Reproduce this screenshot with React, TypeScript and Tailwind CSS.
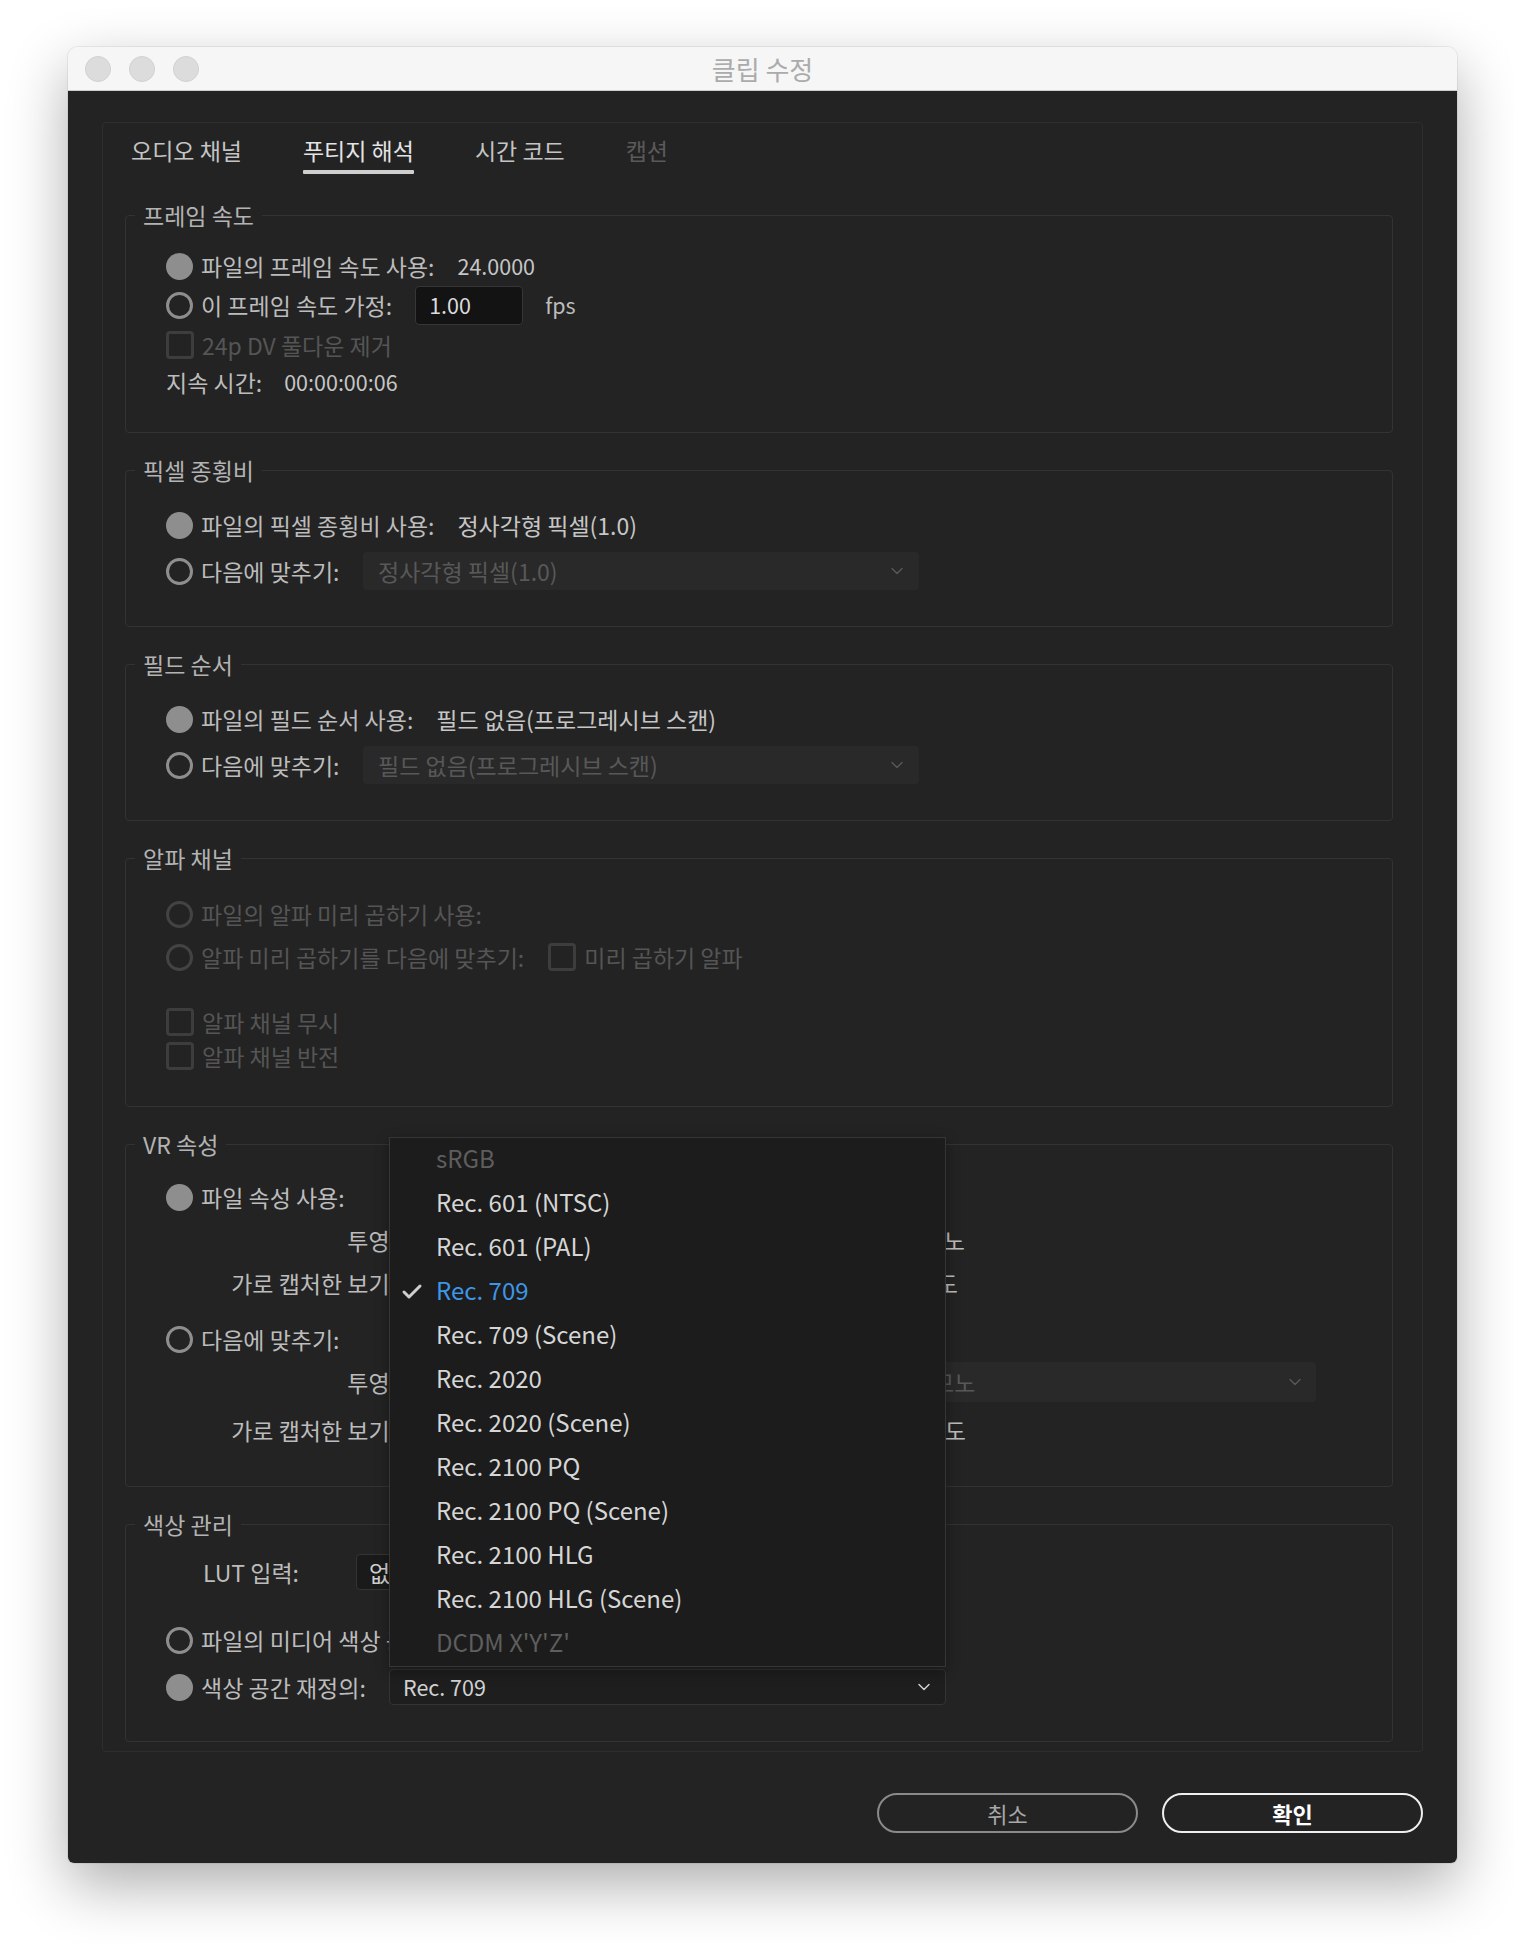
import { Check, ChevronDown } from 'lucide-react';

type RadioKind = 'on' | 'off' | 'dim';

function Radio({ kind }: { kind: RadioKind }) {
  if (kind === 'on') return <span className="w-[27px] h-[27px] shrink-0 rounded-full bg-[#8e8e8e] mr-[8px]" />;
  if (kind === 'off') return <span className="w-[27px] h-[27px] shrink-0 rounded-full border-[3px] border-[#8e8e8e] mr-[8px]" />;
  return <span className="w-[27px] h-[27px] shrink-0 rounded-full border-[3px] border-[#434343] mr-[8px]" />;
}

function CheckBox() {
  return <span className="w-[28px] h-[28px] shrink-0 rounded-[4px] border-[3px] border-[#3d3d3d] mr-[8px]" />;
}

function DimSelect({ value, width }: { value: string; width: string }) {
  return (
    <div className={`${width} h-[38px] rounded-[4px] bg-[#292929] flex items-center justify-between pl-[15px] pr-[12px] text-[#585858]`}>
      <span>{value}</span>
      <ChevronDown size={20} strokeWidth={1.5} className="text-[#5a5a5a]" />
    </div>
  );
}

function Section({ title, children, className }: { title: string; children: React.ReactNode; className: string }) {
  return (
    <fieldset className={`w-[1268px] ml-[22px] border border-[#333333] rounded-[4px] px-[9px] ${className}`}>
      <legend className="px-[8px] leading-[28px] text-[#b3b3b3]">{title}</legend>
      <div className="pl-[31px] flex flex-col">{children}</div>
    </fieldset>
  );
}

const menuItems = [
  { label: 'sRGB', dim: true },
  { label: 'Rec. 601 (NTSC)' },
  { label: 'Rec. 601 (PAL)' },
  { label: 'Rec. 709', selected: true },
  { label: 'Rec. 709 (Scene)' },
  { label: 'Rec. 2020' },
  { label: 'Rec. 2020 (Scene)' },
  { label: 'Rec. 2100 PQ' },
  { label: 'Rec. 2100 PQ (Scene)' },
  { label: 'Rec. 2100 HLG' },
  { label: 'Rec. 2100 HLG (Scene)' },
  { label: "DCDM X'Y'Z'", dim: true },
];

export default function App() {
  return (
    <div className="min-h-[1944px] bg-white pt-[47px] pl-[68px] font-['Noto_Sans_CJK_KR',sans-serif] text-[23px] text-[#bcbcbc]">
      <div className="relative w-[1389px] h-[1816px] rounded-t-[10px] rounded-b-[6px] overflow-hidden shadow-[0_22px_60px_rgba(0,0,0,0.32),0_0_0_1px_rgba(0,0,0,0.06)] flex flex-col">
        {/* title bar */}
        <div className="h-[44px] shrink-0 bg-[#f6f6f6] border-b border-[#cdcdcd] grid grid-cols-[1fr_auto_1fr] items-center">
          <div className="flex items-center gap-[18px] pl-[17px]">
            <span className="w-[26px] h-[26px] rounded-full bg-[#dcdcdc] border border-[#d0d0d0]" />
            <span className="w-[26px] h-[26px] rounded-full bg-[#dcdcdc] border border-[#d0d0d0]" />
            <span className="w-[26px] h-[26px] rounded-full bg-[#dcdcdc] border border-[#d0d0d0]" />
          </div>
          <div className="text-[26px] leading-none text-[#ababab]">클립 수정</div>
          <div />
        </div>

        {/* body */}
        <div className="flex-1 bg-[#232323] pt-[31px] pl-[34px]">
          <div className="w-[1321px] h-[1630px] border border-[#2e2e2e] rounded-[4px]">
            {/* tabs */}
            <div className="flex pt-[12px] pl-[28px] gap-[61px]">
              <div className="flex flex-col">
                <span className="h-[30px] leading-[30px] text-[#c4c4c4]">오디오 채널</span>
              </div>
              <div className="flex flex-col">
                <span className="h-[30px] leading-[30px] text-[#e4e4e4]">푸티지 해석</span>
                <span className="mt-[5px] h-[4px] bg-[#cfcfcf] rounded-[1px]" />
              </div>
              <div className="flex flex-col">
                <span className="h-[30px] leading-[30px] text-[#c4c4c4]">시간 코드</span>
              </div>
              <div className="flex flex-col">
                <span className="h-[30px] leading-[30px] text-[#5a5a5a]">캡션</span>
              </div>
            </div>

            <div className="mt-[27px] flex flex-col gap-[23px]">
              {/* 프레임 속도 */}
              <Section title="프레임 속도" className="pt-[18px] pb-[33px]">
                <div className="h-[38px] flex items-center">
                  <Radio kind="on" />
                  <span>파일의 프레임 속도 사용:</span>
                  <span className="ml-[23px] text-[21.5px] text-[#c6c6c6]">24.0000</span>
                </div>
                <div className="h-[40px] flex items-center">
                  <Radio kind="off" />
                  <span>이 프레임 속도 가정:</span>
                  <div className="ml-[23px] w-[108px] h-[39px] bg-[#131313] border border-[#363636] rounded-[4px] flex items-center pl-[13px] text-[21.5px] text-[#dcdcdc]">
                    1.00
                  </div>
                  <span className="ml-[22px] text-[21.5px]">fps</span>
                </div>
                <div className="h-[40px] flex items-center text-[#555555]">
                  <CheckBox />
                  <span>24p DV 풀다운 제거</span>
                </div>
                <div className="h-[34px] flex items-center">
                  <span>지속 시간:</span>
                  <span className="ml-[22px] text-[21.5px] text-[#c6c6c6]">00:00:00:06</span>
                </div>
              </Section>

              {/* 픽셀 종횡비 */}
              <Section title="픽셀 종횡비" className="pt-[22px] pb-[36px]">
                <div className="h-[38px] flex items-center">
                  <Radio kind="on" />
                  <span>파일의 픽셀 종횡비 사용:</span>
                  <span className="ml-[23px] text-[#c6c6c6]">정사각형 픽셀(1.0)</span>
                </div>
                <div className="h-[38px] mt-[8px] flex items-center">
                  <Radio kind="off" />
                  <span className="w-[162px]">다음에 맞추기:</span>
                  <DimSelect value="정사각형 픽셀(1.0)" width="w-[556px]" />
                </div>
              </Section>

              {/* 필드 순서 */}
              <Section title="필드 순서" className="pt-[22px] pb-[36px]">
                <div className="h-[38px] flex items-center">
                  <Radio kind="on" />
                  <span>파일의 필드 순서 사용:</span>
                  <span className="ml-[23px] text-[#c6c6c6]">필드 없음(프로그레시브 스캔)</span>
                </div>
                <div className="h-[38px] mt-[8px] flex items-center">
                  <Radio kind="off" />
                  <span className="w-[162px]">다음에 맞추기:</span>
                  <DimSelect value="필드 없음(프로그레시브 스캔)" width="w-[556px]" />
                </div>
              </Section>

              {/* 알파 채널 */}
              <Section title="알파 채널" className="pt-[22px] pb-[33px]">
                <div className="h-[40px] flex items-center text-[#555555]">
                  <Radio kind="dim" />
                  <span>파일의 알파 미리 곱하기 사용:</span>
                </div>
                <div className="h-[40px] mt-[3px] flex items-center text-[#555555]">
                  <Radio kind="dim" />
                  <span>알파 미리 곱하기를 다음에 맞추기:</span>
                  <span className="ml-[24px]" />
                  <CheckBox />
                  <span>미리 곱하기 알파</span>
                </div>
                <div className="h-[34px] mt-[28px] flex items-center text-[#555555]">
                  <CheckBox />
                  <span>알파 채널 무시</span>
                </div>
                <div className="h-[34px] flex items-center text-[#555555]">
                  <CheckBox />
                  <span>알파 채널 반전</span>
                </div>
              </Section>

              {/* VR 속성 */}
              <Section title="VR 속성" className="pt-[17px] pb-[34px]">
                <div className="h-[44px] flex items-center">
                  <Radio kind="on" />
                  <span>파일 속성 사용:</span>
                </div>
                <div className="h-[42px] flex items-center">
                  <span className="w-[230px] text-right">투영:</span>
                  <div className="w-[569px] flex justify-between">
                    <span className="ml-[12px]">등장방형</span>
                    <span>레이아웃: 모노</span>
                  </div>
                </div>
                <div className="h-[44px] flex items-center">
                  <span className="w-[230px] text-right">가로 캡처한 보기:</span>
                  <div className="w-[562px] flex justify-between">
                    <span className="ml-[12px]">360°</span>
                    <span>세로 180도</span>
                  </div>
                </div>
                <div className="h-[44px] mt-[12px] flex items-center">
                  <Radio kind="off" />
                  <span>다음에 맞추기:</span>
                </div>
                <div className="h-[42px] flex items-center">
                  <span className="w-[230px] text-right">투영:</span>
                  <div className="w-[522px]" />
                  <div className="w-[398px] h-[40px] rounded-[4px] bg-[#292929] flex items-center justify-between pl-[15px] pr-[11px] text-[#585858]">
                    <span>모노</span>
                    <ChevronDown size={20} strokeWidth={1.5} className="text-[#5a5a5a]" />
                  </div>
                </div>
                <div className="h-[44px] mt-[5px] flex items-center">
                  <span className="w-[230px] text-right">가로 캡처한 보기:</span>
                  <div className="w-[570px] flex justify-between">
                    <span className="ml-[12px]">360°</span>
                    <span>180도</span>
                  </div>
                </div>
              </Section>

              {/* 색상 관리 */}
              <Section title="색상 관리" className="pt-[16px] pb-[35px]">
                <div className="h-[36px] flex items-center">
                  <span className="w-[190px] pl-[37px]">LUT 입력:</span>
                  <div className="w-[560px] h-[36px] bg-[#1a1a1a] border border-[#343434] rounded-[4px] flex items-center pl-[12px] text-[#d0d0d0]">
                    없음
                  </div>
                </div>
                <div className="h-[38px] mt-[31px] flex items-center">
                  <Radio kind="off" />
                  <span>파일의 미디어 색상 공간 사용:</span>
                </div>
                <div className="h-[38px] mt-[9px] flex items-center">
                  <div className="w-[223px] flex items-center">
                    <Radio kind="on" />
                    <span>색상 공간 재정의:</span>
                  </div>
                  <div className="w-[557px] h-[36px] bg-[#1e1e1e] border border-[#343434] rounded-[4px] flex items-center justify-between pl-[13px] pr-[11px] text-[21.5px] text-[#d2d2d2]">
                    <span>Rec. 709</span>
                    <ChevronDown size={20} strokeWidth={1.75} className="text-[#d0d0d0]" />
                  </div>
                </div>
              </Section>
            </div>
          </div>

          {/* buttons */}
          <div className="w-[1321px] mt-[41px] flex justify-end gap-[24px]">
            <button className="w-[261px] h-[40px] rounded-full border-2 border-[#8a8a8a] text-[#a8a8a8] text-[22px] leading-none">
              취소
            </button>
            <button className="w-[261px] h-[40px] rounded-full border-2 border-[#efefef] text-white font-semibold text-[22px] leading-none">
              확인
            </button>
          </div>
        </div>

        {/* open colour-space menu */}
        <div className="absolute left-[321px] top-[1090px] w-[557px] bg-[#1c1c1c] border border-[#363636] shadow-[0_4px_12px_rgba(0,0,0,0.35)]">
          {menuItems.map((item) => (
            <div key={item.label} className="h-[44px] pb-[4px] flex items-center text-[24px]">
              <div className="w-[46px] pl-[10px] pt-[3px] flex items-center">
                {item.selected && <Check size={24} strokeWidth={3} className="text-[#cfcfcf]" />}
              </div>
              <span
                className={
                  item.selected ? 'text-[#3d96e6]' : item.dim ? 'text-[#5e5e5e]' : 'text-[#d6d6d6]'
                }
              >
                {item.label}
              </span>
            </div>
          ))}
        </div>
      </div>
    </div>
  );
}
